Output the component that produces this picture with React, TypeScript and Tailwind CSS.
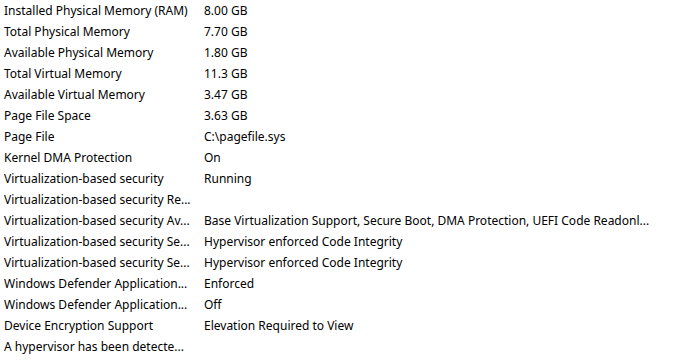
import React from "react";

// Labels/values are shown as the window clips them
const rows: [string, string][] = [
  ["Installed Physical Memory (RAM)", "8.00 GB"],
  ["Total Physical Memory", "7.70 GB"],
  ["Available Physical Memory", "1.80 GB"],
  ["Total Virtual Memory", "11.3 GB"],
  ["Available Virtual Memory", "3.47 GB"],
  ["Page File Space", "3.63 GB"],
  ["Page File", "C:\\pagefile.sys"],
  ["Kernel DMA Protection", "On"],
  ["Virtualization-based security", "Running"],
  ["Virtualization-based security Re...", ""],
  ["Virtualization-based security Av...", "Base Virtualization Support, Secure Boot, DMA Protection, UEFI Code Readonl..."],
  ["Virtualization-based security Se...", "Hypervisor enforced Code Integrity"],
  ["Virtualization-based security Se...", "Hypervisor enforced Code Integrity"],
  ["Windows Defender Application...", "Enforced"],
  ["Windows Defender Application...", "Off"],
  ["Device Encryption Support", "Elevation Required to View"],
  ["A hypervisor has been detecte...", ""],
];

export default function App() {
  return (
    <div
      className="w-[682px] h-[364px] overflow-hidden bg-white text-black text-[12px]"
      style={{ fontFamily: '"Segoe UI", "Noto Sans", sans-serif' }}
    >
      {rows.map(([item, value], i) => (
        <div key={i} className="flex h-[21px] items-center whitespace-nowrap">
          <div className="w-[200px] shrink-0 pl-[4px]">{item}</div>
          <div className="shrink-0 pl-[4px]">{value}</div>
        </div>
      ))}
    </div>
  );
}
